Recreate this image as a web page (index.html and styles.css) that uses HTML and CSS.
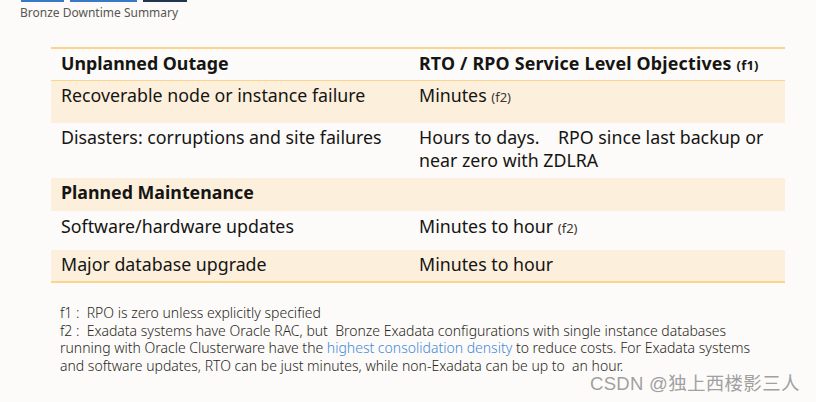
FILE: index.html
```html
<!DOCTYPE html>
<html>
<head>
<meta charset="utf-8">
<link rel="stylesheet" href="styles.css">
</head>
<body>
<div class="page">
  <div class="tabs">
    <span class="tab tab-a"></span>
    <span class="tab tab-b"></span>
    <span class="tab tab-c"></span>
  </div>
  <div class="title">Bronze Downtime Summary</div>
  <div class="table">
    <div class="row head">
      <div class="cell">Unplanned Outage</div>
      <div class="cell">RTO / RPO Service Level Objectives <span class="note-b">(f1)</span></div>
    </div>
    <div class="row shaded r1">
      <div class="cell">Recoverable node or instance failure</div>
      <div class="cell">Minutes <span class="note">(f2)</span></div>
    </div>
    <div class="row r2">
      <div class="cell">Disasters: corruptions and site failures</div>
      <div class="cell">Hours to days.&nbsp;&nbsp;&nbsp; RPO since last backup or near zero with ZDLRA</div>
    </div>
    <div class="row shaded head2">
      <div class="cell">Planned Maintenance</div>
      <div class="cell"></div>
    </div>
    <div class="row r4">
      <div class="cell">Software/hardware updates</div>
      <div class="cell">Minutes to hour <span class="note">(f2)</span></div>
    </div>
    <div class="row shaded last">
      <div class="cell">Major database upgrade</div>
      <div class="cell">Minutes to hour</div>
    </div>
  </div>
  <div class="foot">
    <p>f1 :&nbsp; RPO is zero unless explicitly specified</p>
    <p>f2 :&nbsp; Exadata systems have Oracle RAC, but&nbsp; Bronze Exadata configurations with single instance databases<br>running with Oracle Clusterware have the <span class="link">highest consolidation density</span> to reduce costs. For Exadata systems<br>and software updates, RTO can be just minutes, while non-Exadata can be up to&nbsp; an hour.</p>
  </div>
  <div class="watermark">CSDN @独上西楼影三人</div>
</div>
</body>
</html>
```
FILE: styles.css
```css
html, body {
  margin: 0;
  padding: 0;
  background: #fcfbf9;
}
.page {
  position: relative;
  width: 816px;
  height: 402px;
  overflow: hidden;
  font-family: "Noto Sans", "Open Sans", sans-serif;
  color: #161513;
}
.tabs {
  display: flex;
  height: 2px;
  padding-left: 21px;
}
.tab { display: block; height: 2px; }
.tab-a { width: 43px; background: #3a78c8; margin-right: 6px; }
.tab-b { width: 67px; background: #3a78c8; margin-right: 6px; }
.tab-c { width: 44px; background: #1f3550; }
.title {
  padding-left: 20px;
  margin-top: 3px;
  font-size: 12px;
  line-height: 16px;
  color: #5a5652;
}
.table {
  margin: 26px 31px 0 51px;
  border-top: 2px solid #fbd58a;
  border-bottom: 2px solid #fbd58a;
}
.row {
  display: grid;
  grid-template-columns: 358px 1fr;
}
.cell {
  padding: 2px 10px 0 10px;
  font-size: 17.8px;
  line-height: 23px;
}
.head { height: 31px; border-bottom: 1px solid #fbd58a; font-weight: 700; }
.head .cell { padding-top: 3px; }
.head .cell + .cell { letter-spacing: 0.2px; }
.shaded { background: #fcf0dd; }
.r1 { height: 42px; }
.r1 .cell { padding-top: 3px; }
.r2 { height: 55px; }
.r2 .cell { padding-top: 3px; }
.head2 { height: 33px; font-weight: 700; }
.head2 .cell { padding-top: 3px; }
.r4 { height: 39px; }
.r4 .cell { padding-top: 4px; }
.last { height: 31px; }
.last .cell { padding-top: 3px; }
.note { font-size: 13px; color: #3a3632; }
.note-b { font-size: 13px; }
.foot {
  margin: 21px 40px 0 60px;
  font-size: 14px;
  line-height: 17.5px;
  color: #2a2724;
  font-weight: 300;
  white-space: nowrap;
}
.foot p { margin: 0; }
.link { color: #3f8ad6; }
.watermark {
  position: absolute;
  left: 590px;
  top: 369px;
  font-family: "Liberation Sans", "Noto Sans CJK SC", sans-serif;
  font-size: 18.5px;
  letter-spacing: 0.3px;
  color: #a0a0a0;
  text-shadow: 0 0 1px #fff, 0 0 1px #fff;
}
```
